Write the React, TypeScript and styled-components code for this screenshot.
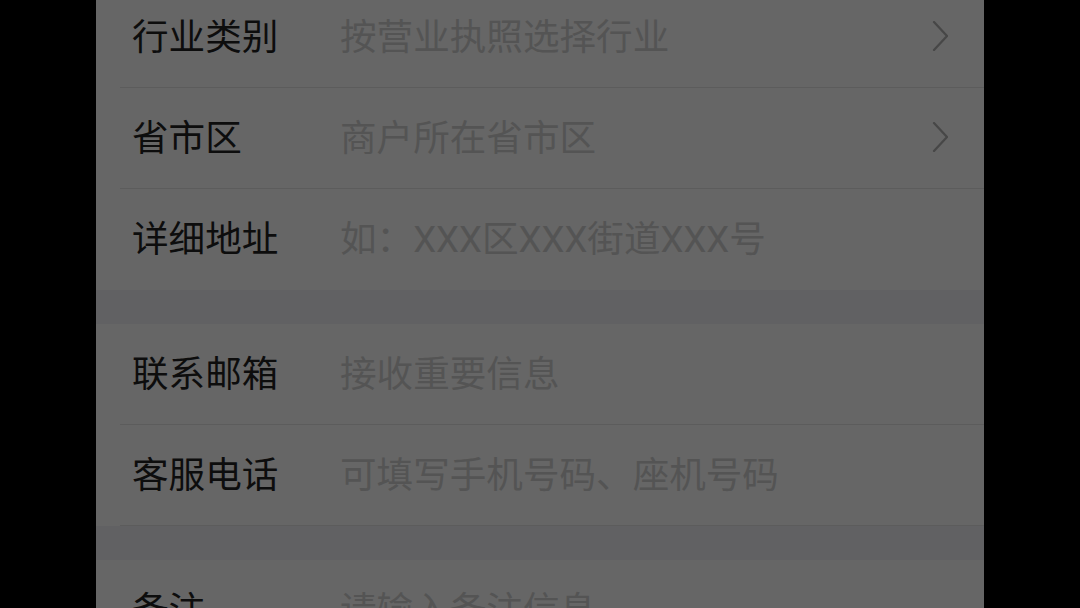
import React from 'react';
import styled, { createGlobalStyle } from 'styled-components';

const GlobalStyle = createGlobalStyle`
  html, body {
    margin: 0;
    padding: 0;
    background: #000;
  }
  body {
    font-family: Roboto, "Noto Sans CJK SC", "Noto Sans", sans-serif;
  }
`

const Screen = styled.div`
  display: flex;
  justify-content: center;
  height: 608px;
  overflow: hidden;
  background: #000;
`

const Panel = styled.div`
  width: 888px;
  background: #616163;
  overflow: hidden;
`

// the list is scrolled a little, so the first row starts above the top edge
const Scroller = styled.div`
  margin-top: -13px;
  display: flex;
  flex-direction: column;
`

const Section = styled.div`
  background: #666666;
  display: flex;
  flex-direction: column;
`

const Gap = styled.div`
  height: 34px;
  background: #616163;
`

const Row = styled.div<{ $line: boolean }>`
  box-sizing: border-box;
  height: 101px;
  margin-left: 24px;
  padding: 0 36px 6px 12px;
  display: flex;
  align-items: center;
  border-bottom: 1px solid ${(p) => (p.$line ? '#5c5c5c' : 'transparent')};
`

const Label = styled.span`
  width: 208px;
  flex-shrink: 0;
  font-size: 36.6px;
  color: #0d0d0d;
  white-space: nowrap;
`

const Placeholder = styled.span`
  flex: 1;
  font-size: 36.6px;
  color: #545454;
  white-space: nowrap;
`

const Chevron = styled.svg`
  width: 16px;
  height: 30px;
  margin-top: 4px;
  flex-shrink: 0;
`

type Field = { label: string; hint: string; arrow?: boolean; line?: boolean };

const sections: Field[][] = [
  [
    { label: '行业类别', hint: '按营业执照选择行业', arrow: true, line: true },
    { label: '省市区', hint: '商户所在省市区', arrow: true, line: true },
    { label: '详细地址', hint: '如：XXX区XXX街道XXX号' },
  ],
  [
    { label: '联系邮箱', hint: '接收重要信息', line: true },
    { label: '客服电话', hint: '可填写手机号码、座机号码', line: true },
  ],
  [
    { label: '备注', hint: '请输入备注信息' },
  ],
];

const FormRow = ({ field }: { field: Field }) => (
  <Row $line={!!field.line}>
    <Label>{field.label}</Label>
    <Placeholder>{field.hint}</Placeholder>
    {field.arrow && (
      <Chevron viewBox="0 0 16 30">
        <polyline points="2,1 15,15 2,29" fill="none" stroke="#474747" strokeWidth="2.2" strokeLinecap="round" strokeLinejoin="round" />
      </Chevron>
    )}
  </Row>
)

export default function App() {
  return (
    <>
      <GlobalStyle />
      <Screen>
        <Panel>
          <Scroller>
            {sections.map((fields, i) => (
              <React.Fragment key={i}>
                {i > 0 && <Gap />}
                <Section>
                  {fields.map((f) => <FormRow key={f.label} field={f} />)}
                </Section>
              </React.Fragment>
            ))}
          </Scroller>
        </Panel>
      </Screen>
    </>
  )
}
